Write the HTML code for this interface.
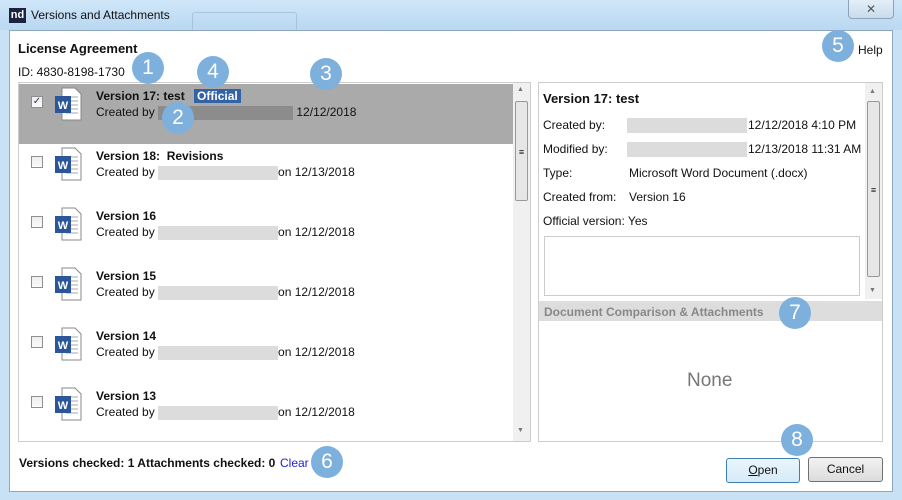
<!DOCTYPE html>
<html><head><style>
*{box-sizing:border-box;margin:0;padding:0}
body{width:902px;height:500px;overflow:hidden;font-family:"Liberation Sans",sans-serif;font-size:12px;color:#111;background:#c9e1f5;position:relative}
.a{position:absolute}
.title{left:0;top:0;width:902px;height:30px;background:linear-gradient(#cfe6f8,#b9d8f2)}
.client{left:9px;top:30px;width:884px;height:462px;background:#fff;border:1px solid #8fa7bf}
.circ{position:absolute;width:32px;height:32px;border-radius:50%;background:#7eb0de;color:#fff;font-size:21px;text-align:center;line-height:32px}
.row{position:absolute;left:19px;width:494px;height:60px}
.cb{position:absolute;left:12px;top:12px;width:12px;height:12px;border:1px solid #8e8f8f;background:linear-gradient(#eee,#fafafa)}
.ic{position:absolute;left:35px;top:3px;width:28px;height:34px}
.t1{position:absolute;left:77px;top:5px;font-weight:bold;font-size:12px}
.t2{position:absolute;left:77px;top:21px;font-size:12px}
.blur{display:inline-block;width:120px;height:14px;background:#dcdcdc;vertical-align:middle}
.lbl{position:absolute;left:543px;font-size:12px}
.btn{position:absolute;height:25px;border:1px solid #707070;border-radius:3px;background:linear-gradient(#f2f2f2,#dcdcdc);text-align:center;line-height:23px;font-size:12px}
</style></head><body>
<div class="a title"></div>
<div class="a" style="left:9px;top:8px;width:17px;height:15px;background:#1b2340;color:#fff;font-weight:bold;font-size:11px;line-height:15px;text-align:center">nd</div>
<div class="a" style="left:31px;top:8px;font-size:12px">Versions and Attachments</div>
<div class="a" style="left:192px;top:12px;width:105px;height:20px;border:1px solid #a9c3da;border-radius:3px"></div>
<div class="a" style="left:848px;top:0;width:46px;height:19px;border:1px solid #8fa3b8;border-top:none;border-radius:0 0 4px 4px;background:linear-gradient(#e4eef8,#c8dced);text-align:center;color:#555;font-size:12px;line-height:18px">✕</div>
<div class="a client"></div>
<div class="a" style="left:18px;top:41px;font-weight:bold;font-size:13px">License Agreement</div>
<div class="a" style="left:18px;top:65px;font-size:12px">ID: 4830-8198-1730</div>
<div class="a" style="left:858px;top:43px;font-size:12px">Help</div>

<div class="a" style="left:18px;top:82px;width:513px;height:360px;border:1px solid #ccc"></div>
<div class="a" style="left:513px;top:83px;width:17px;height:358px;background:#f0f0f0"></div>
<div class="a" style="left:515px;top:101px;width:13px;height:100px;border:1px solid #999;border-radius:2px;background:#e6e6e6;text-align:center;line-height:100px;font-size:9px">≡</div>
<div class="a" style="left:517px;top:86px;font-size:7px;color:#777">▲</div>
<div class="a" style="left:517px;top:427px;font-size:7px;color:#777">▼</div>

<div class="row" style="top:84px;background:#aaa"><div class="cb" style="color:#336;font-size:10px;line-height:10px;text-align:center">✓</div>
<svg class="ic" viewBox="0 0 28 34"><path d="M8 1h13l6 6v26H8z" fill="#fff" stroke="#888"/><path d="M12 10h12M12 14h12M12 18h12M12 22h12M12 26h12" stroke="#aaa"/><rect x="1" y="9" width="16" height="17" fill="#2b579a"/><text x="9" y="22" fill="#fff" font-size="11" font-weight="bold" text-anchor="middle" font-family="Liberation Sans">W</text></svg>
<div class="t1">Version 17: test <span style="background:#3363a6;color:#fff;padding:0 3px;margin-left:6px">Official</span></div>
<div class="t2">Created by <span class="blur" style="background:#8c8c8c;width:135px"></span> 12/12/2018</div></div>

<div class="row" style="top:144px"><div class="cb"></div><svg class="ic" viewBox="0 0 28 34"><path d="M8 1h13l6 6v26H8z" fill="#fff" stroke="#888"/><path d="M12 10h12M12 14h12M12 18h12M12 22h12M12 26h12" stroke="#aaa"/><rect x="1" y="9" width="16" height="17" fill="#2b579a"/><text x="9" y="22" fill="#fff" font-size="11" font-weight="bold" text-anchor="middle" font-family="Liberation Sans">W</text></svg><div class="t1">Version 18:&nbsp; Revisions</div><div class="t2">Created by <span class="blur"></span>on 12/13/2018</div></div>
<div class="row" style="top:204px"><div class="cb"></div><svg class="ic" viewBox="0 0 28 34"><path d="M8 1h13l6 6v26H8z" fill="#fff" stroke="#888"/><path d="M12 10h12M12 14h12M12 18h12M12 22h12M12 26h12" stroke="#aaa"/><rect x="1" y="9" width="16" height="17" fill="#2b579a"/><text x="9" y="22" fill="#fff" font-size="11" font-weight="bold" text-anchor="middle" font-family="Liberation Sans">W</text></svg><div class="t1">Version 16</div><div class="t2">Created by <span class="blur"></span>on 12/12/2018</div></div>
<div class="row" style="top:264px"><div class="cb"></div><svg class="ic" viewBox="0 0 28 34"><path d="M8 1h13l6 6v26H8z" fill="#fff" stroke="#888"/><path d="M12 10h12M12 14h12M12 18h12M12 22h12M12 26h12" stroke="#aaa"/><rect x="1" y="9" width="16" height="17" fill="#2b579a"/><text x="9" y="22" fill="#fff" font-size="11" font-weight="bold" text-anchor="middle" font-family="Liberation Sans">W</text></svg><div class="t1">Version 15</div><div class="t2">Created by <span class="blur"></span>on 12/12/2018</div></div>
<div class="row" style="top:324px"><div class="cb"></div><svg class="ic" viewBox="0 0 28 34"><path d="M8 1h13l6 6v26H8z" fill="#fff" stroke="#888"/><path d="M12 10h12M12 14h12M12 18h12M12 22h12M12 26h12" stroke="#aaa"/><rect x="1" y="9" width="16" height="17" fill="#2b579a"/><text x="9" y="22" fill="#fff" font-size="11" font-weight="bold" text-anchor="middle" font-family="Liberation Sans">W</text></svg><div class="t1">Version 14</div><div class="t2">Created by <span class="blur"></span>on 12/12/2018</div></div>
<div class="row" style="top:384px"><div class="cb"></div><svg class="ic" viewBox="0 0 28 34"><path d="M8 1h13l6 6v26H8z" fill="#fff" stroke="#888"/><path d="M12 10h12M12 14h12M12 18h12M12 22h12M12 26h12" stroke="#aaa"/><rect x="1" y="9" width="16" height="17" fill="#2b579a"/><text x="9" y="22" fill="#fff" font-size="11" font-weight="bold" text-anchor="middle" font-family="Liberation Sans">W</text></svg><div class="t1">Version 13</div><div class="t2">Created by <span class="blur"></span>on 12/12/2018</div></div>

<div class="a" style="left:538px;top:82px;width:345px;height:360px;border:1px solid #ccc"></div>
<div class="a" style="left:865px;top:83px;width:17px;height:216px;background:#f0f0f0"></div>
<div class="a" style="left:867px;top:101px;width:13px;height:176px;border:1px solid #999;border-radius:2px;background:#e6e6e6;text-align:center;line-height:176px;font-size:9px">≡</div>
<div class="a" style="left:869px;top:88px;font-size:7px;color:#777">▲</div>
<div class="a" style="left:869px;top:287px;font-size:7px;color:#777">▼</div>
<div class="a" style="left:543px;top:91px;font-weight:bold;font-size:13px">Version 17: test</div>
<div class="lbl" style="top:118px">Created by:</div><div class="a" style="left:627px;top:118px;width:120px;height:15px;background:#dcdcdc"></div><div class="lbl" style="left:748px;top:118px">12/12/2018 4:10 PM</div>
<div class="lbl" style="top:142px">Modified by:</div><div class="a" style="left:627px;top:142px;width:120px;height:15px;background:#dcdcdc"></div><div class="lbl" style="left:748px;top:142px">12/13/2018 11:31 AM</div>
<div class="lbl" style="top:166px">Type:</div><div class="lbl" style="left:629px;top:166px">Microsoft Word Document (.docx)</div>
<div class="lbl" style="top:190px">Created from:</div><div class="lbl" style="left:629px;top:190px">Version 16</div>
<div class="lbl" style="top:214px">Official version: Yes</div>
<div class="a" style="left:544px;top:236px;width:316px;height:60px;border:1px solid #ccc"></div>
<div class="a" style="left:539px;top:301px;width:343px;height:20px;background:#ddd;color:#888;font-weight:bold;font-size:12px;padding:4px 0 0 5px">Document Comparison &amp; Attachments</div>
<div class="a" style="left:687px;top:370px;font-size:19px;color:#777">None</div>

<div class="a" style="left:19px;top:456px;font-weight:bold;font-size:12px">Versions checked: 1 Attachments checked: 0</div>
<div class="a" style="left:280px;top:456px;color:#2020e0;font-size:12px">Clear</div>
<div class="btn" style="left:726px;top:458px;width:74px;border-color:#3c7fb1;background:linear-gradient(#eaf6fd,#d5eaf8)"><u>O</u>pen</div>
<div class="btn" style="left:808px;top:457px;width:75px">Cancel</div>

<div class="circ" style="left:132px;top:52px">1</div>
<div class="circ" style="left:162px;top:102px">2</div>
<div class="circ" style="left:310px;top:58px">3</div>
<div class="circ" style="left:197px;top:56px">4</div>
<div class="circ" style="left:822px;top:30px">5</div>
<div class="circ" style="left:311px;top:446px">6</div>
<div class="circ" style="left:779px;top:297px">7</div>
<div class="circ" style="left:781px;top:424px">8</div>
</body></html>
